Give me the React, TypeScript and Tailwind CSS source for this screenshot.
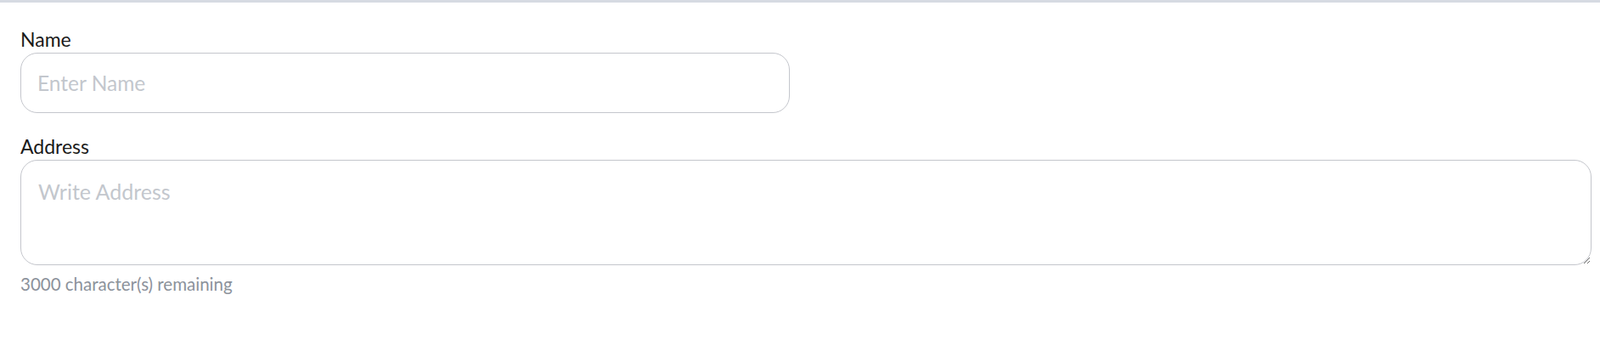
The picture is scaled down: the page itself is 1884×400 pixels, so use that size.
import React from "react";

export default function App() {
  return (
    <div className="min-h-[400px] w-full bg-white" style={{ fontFamily: "Lato, 'Open Sans', sans-serif" }}>
      <div className="h-[3px] w-full bg-[#d6dae2]" />
      <div className="pl-[24px] pr-[10px] pt-[30px]">
        <label className="block text-[23px] leading-[26px] text-[#1b1b1b]">Name</label>
        <input
          type="text"
          placeholder="Enter Name"
          className="mt-[3px] block h-[71px] w-[906px] rounded-[20px] border border-[#c4c6cc] bg-white px-[19px] text-[24.5px] leading-normal text-[#333] outline-none placeholder:text-[#c3c7cd]"
        />
        <label className="mt-[26px] block text-[23px] leading-[26px] text-[#1b1b1b]">Address</label>
        <textarea
          placeholder="Write Address"
          className="mt-[3px] block h-[124px] w-full rounded-[20px] border border-[#c4c6cc] bg-white px-[20px] pt-[18px] text-[25px] leading-normal text-[#333] outline-none placeholder:text-[#c3c7cd]"
        />
        <div className="mt-[10px] text-[20.5px] leading-[24px] text-[#8c929b]">3000 character(s) remaining</div>
      </div>
    </div>
  );
}
